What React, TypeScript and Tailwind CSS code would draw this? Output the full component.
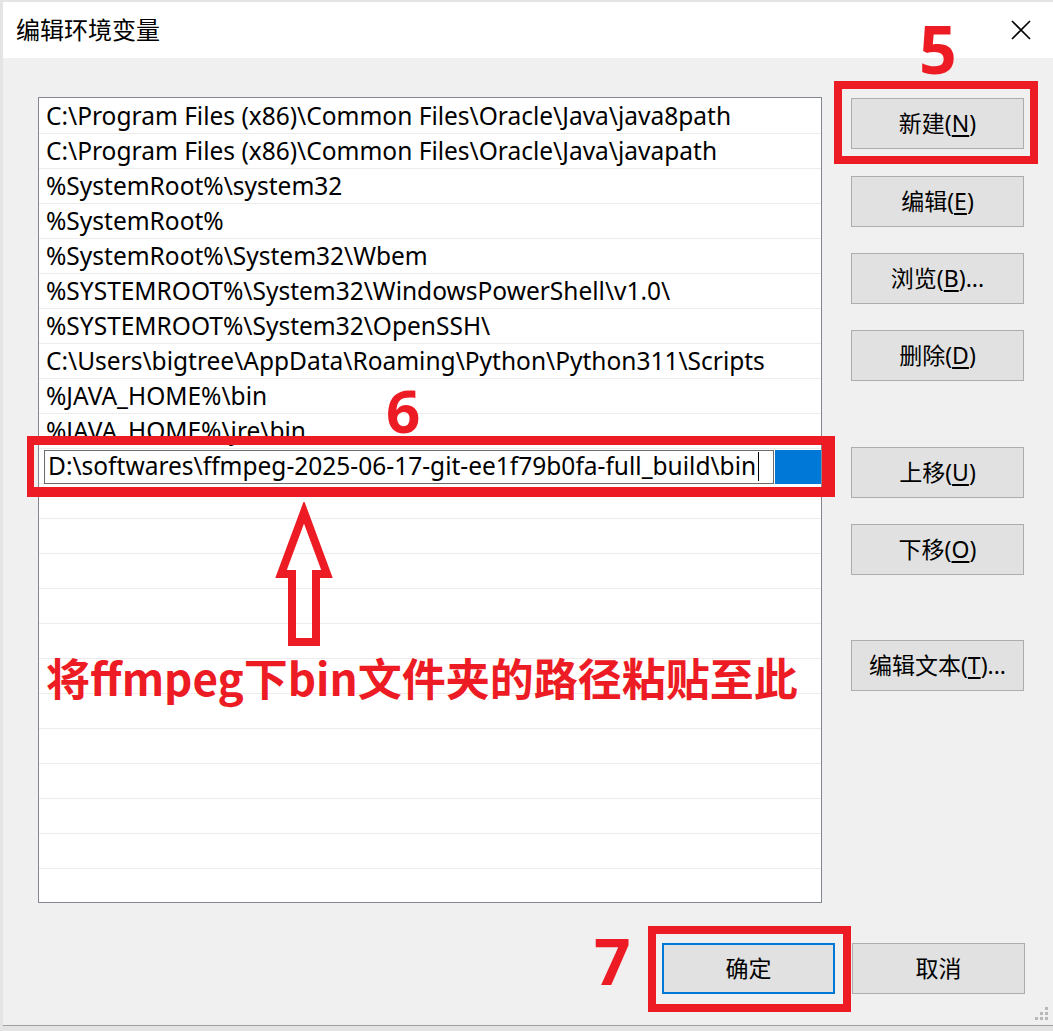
const paths = [
  "C:\\Program Files (x86)\\Common Files\\Oracle\\Java\\java8path",
  "C:\\Program Files (x86)\\Common Files\\Oracle\\Java\\javapath",
  "%SystemRoot%\\system32",
  "%SystemRoot%",
  "%SystemRoot%\\System32\\Wbem",
  "%SYSTEMROOT%\\System32\\WindowsPowerShell\\v1.0\\",
  "%SYSTEMROOT%\\System32\\OpenSSH\\",
  "C:\\Users\\bigtree\\AppData\\Roaming\\Python\\Python311\\Scripts",
  "%JAVA_HOME%\\bin",
  "%JAVA_HOME%\\jre\\bin",
];

const editing = "D:\\softwares\\ffmpeg-2025-06-17-git-ee1f79b0fa-full_build\\bin";

const sideButtons = [
  { label: "新建", hot: "N", tail: "", gap: "mt-0" },
  { label: "编辑", hot: "E", tail: "", gap: "mt-[27px]" },
  { label: "浏览", hot: "B", tail: "...", gap: "mt-[26px]" },
  { label: "删除", hot: "D", tail: "", gap: "mt-[26px]" },
  { label: "上移", hot: "U", tail: "", gap: "mt-[66px]" },
  { label: "下移", hot: "O", tail: "", gap: "mt-[26px]" },
  { label: "编辑文本", hot: "T", tail: "...", gap: "mt-[65px]" },
];

const ui = "font-['Noto_Sans','Noto_Sans_CJK_SC',sans-serif]";

function WinButton({
  children,
  className = "",
  focused = false,
}: {
  children: React.ReactNode;
  className?: string;
  focused?: boolean;
}) {
  return (
    <div
      className={`w-[173px] h-[51px] flex items-center justify-center bg-[#e1e1e1] text-[23px] text-black ${
        focused ? "border-2 border-[#0078d7]" : "border border-[#adadad]"
      } ${className}`}
    >
      {children}
    </div>
  );
}

export default function App() {
  const rows = Array.from({ length: 23 }, (_, i) => i);

  return (
    <div className={`relative w-[1053px] h-[1031px] overflow-hidden bg-[#e4e4e4] ${ui}`}>
      {/* dialog */}
      <div className="ml-[3px] mt-[2px] w-[1050px] h-[1024px] flex flex-col bg-[#f0f0f0] border-b border-[#a0a0a0] relative">
        {/* title bar */}
        <div className="h-[56px] bg-white flex items-center justify-between pl-[13px] pr-[22px]">
          <span className="text-[24px] text-black leading-none">编辑环境变量</span>
          <svg width="20" height="20" viewBox="0 0 20 20" className="text-black">
            <path d="M1 1 L19 19 M19 1 L1 19" stroke="currentColor" strokeWidth="1.6" />
          </svg>
        </div>

        {/* body */}
        <div className="flex flex-col pl-[35px] pt-[39px]">
          <div className="flex gap-[29px]">
            {/* list */}
            <div className="w-[784px] h-[806px] bg-white border border-[#828790] pt-[1px] overflow-hidden">
              {rows.map((i) => (
                <div key={i} className="h-[35px] border-b border-[#ececec] flex items-center">
                  {i < paths.length && (
                    <span className="pl-[7px] text-[24.5px] text-black whitespace-nowrap leading-none">
                      {paths[i]}
                    </span>
                  )}
                  {i === paths.length && (
                    <div className="flex w-full h-[34px] -mb-px">
                      <div className="ml-[5px] w-[730px] h-full border border-[#6b6b6b] bg-white flex items-center pl-[3px]">
                        <span className="text-[24.5px] text-black whitespace-nowrap leading-none">{editing}</span>
                        <span className="ml-[2px] w-px h-[29px] bg-black" />
                      </div>
                      <div className="flex-1 h-full bg-[#0078d7] ml-px" />
                    </div>
                  )}
                </div>
              ))}
            </div>

            {/* side buttons */}
            <div className="flex flex-col mt-[1px]">
              {sideButtons.map((b) => (
                <WinButton key={b.label} className={b.gap}>
                  {b.label}(<u className="underline-offset-[3px]">{b.hot}</u>){b.tail}
                </WinButton>
              ))}
            </div>
          </div>

          {/* ok / cancel */}
          <div className="flex gap-[17px] mt-[40px] pl-[624px]">
            <WinButton focused>确定</WinButton>
            <WinButton>取消</WinButton>
          </div>
        </div>

        {/* resize grip */}
        <svg width="14" height="14" viewBox="0 0 14 14" className="absolute right-[4px] bottom-[4px]">
          <rect x="10" y="0" width="3" height="3" fill="#b8b8b8" />
          <rect x="5" y="5" width="3" height="3" fill="#b8b8b8" />
          <rect x="10" y="5" width="3" height="3" fill="#b8b8b8" />
          <rect x="0" y="10" width="3" height="3" fill="#b8b8b8" />
          <rect x="5" y="10" width="3" height="3" fill="#b8b8b8" />
          <rect x="10" y="10" width="3" height="3" fill="#b8b8b8" />
        </svg>
      </div>

      {/* annotations */}
      <div className="absolute left-[834px] top-[81px] w-[204px] h-[83px] border-[8px] border-[#ed1c24]" />
      <span className="absolute left-[919px] top-[15px] text-[66px] leading-none font-bold text-[#ed1c24] font-['Noto_Sans',sans-serif]">
        5
      </span>

      <div className="absolute left-[27px] top-[436px] w-[808px] h-[61px] border-t-[9px] border-b-[10px] border-l-[7px] border-r-[13px] border-[#ed1c24]" />
      <span className="absolute left-[386px] top-[380px] text-[60px] leading-none font-bold text-[#ed1c24] font-['Noto_Sans',sans-serif]">
        6
      </span>

      <svg className="absolute left-[274px] top-[502px]" width="62" height="150" viewBox="0 0 62 150">
        <polygon
          points="30,10 53,72 42,72 42,140 18,140 18,72 7,72"
          fill="none"
          stroke="#ed1c24"
          strokeWidth="8"
          strokeLinejoin="miter"
        />
      </svg>

      <span className="absolute left-[46px] top-[655px] text-[44px] leading-none font-bold text-[#ed1c24] whitespace-nowrap font-['Noto_Sans_CJK_SC',sans-serif]">
        将ffmpeg下bin文件夹的路径粘贴至此
      </span>

      <div className="absolute left-[648px] top-[926px] w-[203px] h-[86px] border-[8px] border-[#ed1c24]" />
      <span className="absolute left-[594px] top-[929px] text-[64px] leading-none font-bold text-[#ed1c24] font-['Noto_Sans',sans-serif]">
        7
      </span>
    </div>
  );
}
